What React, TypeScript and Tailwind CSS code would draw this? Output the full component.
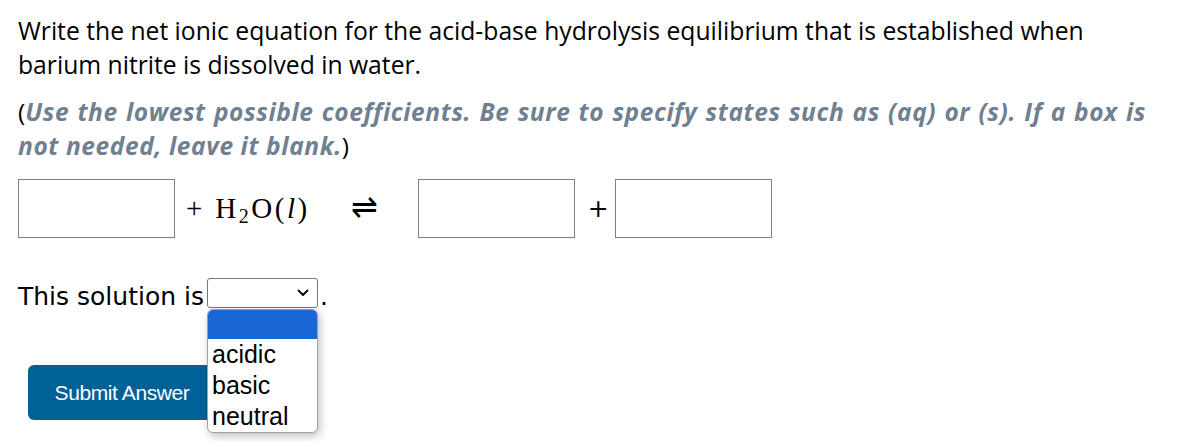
import React from 'react';

const Box = () => (
  <div className="w-[157px] h-[59px] border border-[#808080] bg-white" />
);

export default function App() {
  return (
    <div className="relative w-[1179px] h-[442px] bg-white overflow-hidden text-black">
      <div className="pl-[18px] pr-[33px] pt-[14px]">
        {/* Question */}
        <p className="font-['Open_Sans',sans-serif] text-[24.7px] leading-[34px]">
          Write the net ionic equation for the acid-base hydrolysis equilibrium that is established when
          barium nitrite is dissolved in water.
        </p>
        <p className="mt-[13px] font-['Open_Sans',sans-serif] text-[24.5px] leading-[34px] text-justify">
          (<span className="italic font-bold text-[#708090] tracking-[0.6px]">
            Use the lowest possible coefficients. Be sure to specify states such as (aq) or (s). If a box is
            not needed, leave it blank.
          </span>)
        </p>

        {/* Equation row */}
        <div className="mt-[16px] flex items-center h-[59px]">
          <Box />
          <span className="ml-[11px] font-['Liberation_Serif',serif] text-[29px] leading-none">+</span>
          <span className="ml-[13px] font-['Liberation_Serif',serif] text-[29px] leading-none tracking-[2.5px]">
            H<sub className="text-[20px]">2</sub>O(<i>l</i>)
          </span>
          <span className="ml-[41px] font-['DejaVu_Sans',sans-serif] font-light text-[32px] leading-none -mt-[4px]">⇌</span>
          <div className="ml-[40px]">
            <Box />
          </div>
          <span className="ml-[13px] mr-[6px] font-['DejaVu_Sans',sans-serif] text-[25px] leading-none">+</span>
          <Box />
        </div>

        {/* Solution row */}
        <div className="mt-[39px] flex items-center h-[32px]">
          <span className="mt-[6px] font-['DejaVu_Sans',sans-serif] text-[25px] leading-none">This solution is</span>
          <div className="ml-[3px] w-[111px] h-[30px] border border-[#767676] rounded-[3px] bg-white flex items-center justify-end pr-[8px]">
            <svg width="12" height="8" viewBox="0 0 12 8" fill="none" stroke="#000" strokeWidth="1.8" strokeLinecap="round" strokeLinejoin="round">
              <path d="M1.5 1.5 L6 6 L10.5 1.5" />
            </svg>
          </div>
          <span className="mt-[6px] ml-[2px] font-['DejaVu_Sans',sans-serif] text-[25px] leading-none">.</span>
        </div>

        {/* Submit */}
        <div className="mt-[56px] ml-[10px]">
          <button className="w-[190px] h-[55px] rounded-[6px] bg-[#006197] text-white font-['Liberation_Sans',Arial,sans-serif] text-[21px] tracking-[-0.4px] pr-[2px]">
            Submit Answer
          </button>
        </div>
      </div>

      {/* Open dropdown list */}
      <div className="absolute left-[207px] top-[309px] w-[111px] h-[124px] bg-white border border-[#a0a0a0] rounded-[6px] overflow-hidden shadow-[2px_3px_8px_rgba(0,0,0,0.25)] font-['Liberation_Sans',Arial,sans-serif] text-[25px] leading-[31px]">
        <div className="h-[29px] bg-[#1a66d2]" />
        <div className="pl-[4px]">acidic</div>
        <div className="pl-[4px]">basic</div>
        <div className="pl-[4px]">neutral</div>
      </div>
    </div>
  );
}
